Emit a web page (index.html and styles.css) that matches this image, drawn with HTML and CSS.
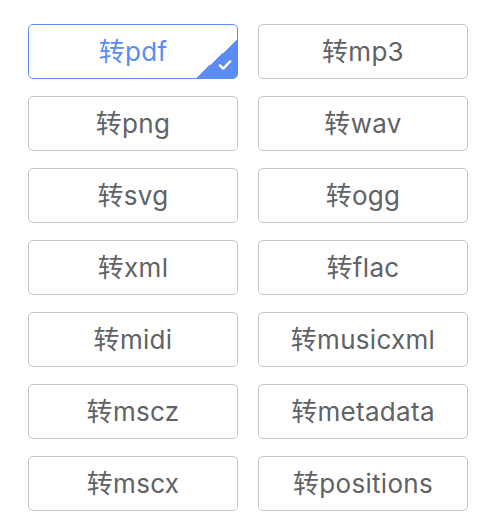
FILE: index.html
```html
<!DOCTYPE html>
<html>
<head>
<meta charset="utf-8">
<link rel="stylesheet" href="styles.css">
</head>
<body>
<div class="grid">
  <div class="opt active">转pdf<span class="corner"><svg class="tick" viewBox="0 0 12 10" width="14" height="12"><path d="M1.6 5.3 L4.6 8.1 L10.4 1.9" fill="none" stroke="#fff" stroke-width="2" stroke-linecap="round" stroke-linejoin="round"/></svg></span></div>
  <div class="opt">转mp3</div>
  <div class="opt">转png</div>
  <div class="opt">转wav</div>
  <div class="opt">转svg</div>
  <div class="opt">转ogg</div>
  <div class="opt">转xml</div>
  <div class="opt">转flac</div>
  <div class="opt">转midi</div>
  <div class="opt">转musicxml</div>
  <div class="opt">转mscz</div>
  <div class="opt">转metadata</div>
  <div class="opt">转mscx</div>
  <div class="opt">转positions</div>
</div>
</body>
</html>
```
FILE: styles.css
```css
html, body {
  margin: 0;
  padding: 0;
  background: #fff;
}
.grid {
  display: grid;
  grid-template-columns: 210px 210px;
  column-gap: 20px;
  row-gap: 17px;
  padding: 24px 0 0 28px;
}
.opt {
  position: relative;
  box-sizing: border-box;
  height: 55px;
  border: 1.5px solid #c4c7ce;
  border-radius: 5px;
  display: flex;
  align-items: center;
  justify-content: center;
  font-family: "Inter", "Noto Sans CJK SC", sans-serif;
  font-size: 26px;
  letter-spacing: 0.3px;
  line-height: 1;
  color: #606266;
  overflow: hidden;
}
.opt.active {
  border-color: #5b8cf5;
  color: #5b8cf5;
}
.corner {
  position: absolute;
  right: 0;
  bottom: 0;
  width: 41px;
  height: 38px;
  background: linear-gradient(to bottom right, transparent 50%, #5b8cf5 50%);
}
.tick {
  position: absolute;
  right: 5px;
  bottom: 7px;
}
```
